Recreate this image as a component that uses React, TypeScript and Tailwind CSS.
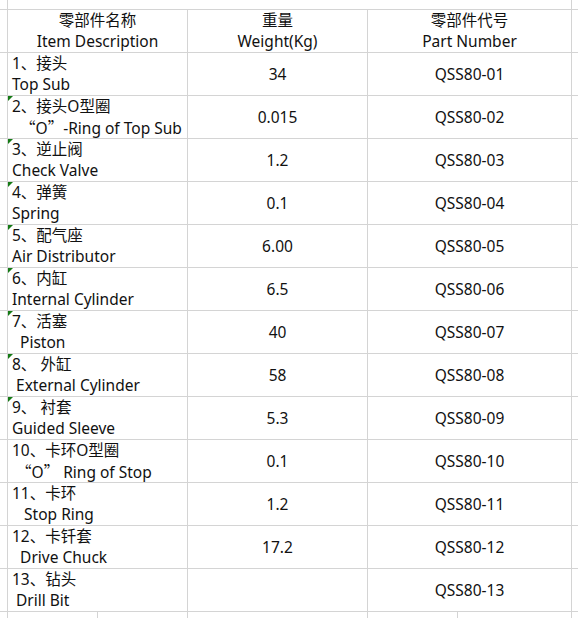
import React from 'react';

type Row = {
  zh: string;
  en: string;
  weight: string;
  part: string;
  flag?: boolean;
};

const rows: Row[] = [
  { zh: '1、接头', en: 'Top Sub', weight: '34', part: 'QSS80-01' },
  { zh: '2、接头O型圈', en: '  “O”-Ring of Top Sub', weight: '0.015', part: 'QSS80-02', flag: true },
  { zh: '3、逆止阀', en: 'Check Valve', weight: '1.2', part: 'QSS80-03', flag: true },
  { zh: '4、弹簧', en: 'Spring', weight: '0.1', part: 'QSS80-04', flag: true },
  { zh: '5、配气座', en: 'Air Distributor', weight: '6.00', part: 'QSS80-05', flag: true },
  { zh: '6、内缸', en: 'Internal Cylinder', weight: '6.5', part: 'QSS80-06', flag: true },
  { zh: '7、活塞', en: '  Piston', weight: '40', part: 'QSS80-07', flag: true },
  { zh: '8、 外缸', en: ' External Cylinder', weight: '58', part: 'QSS80-08', flag: true },
  { zh: '9、 衬套', en: 'Guided Sleeve', weight: '5.3', part: 'QSS80-09', flag: true },
  { zh: '10、卡环O型圈', en: ' “O” Ring of Stop', weight: '0.1', part: 'QSS80-10' },
  { zh: '11、卡环', en: '   Stop Ring', weight: '1.2', part: 'QSS80-11' },
  { zh: '12、卡钎套', en: '  Drive Chuck', weight: '17.2', part: 'QSS80-12' },
  { zh: '13、钻头', en: ' Drill Bit', weight: '', part: 'QSS80-13' },
];

const line = 'border-[#d4d4d4]';

// full-width quotes, as the CJK font draws them
const withQuotes = (s: string) =>
  s.split(/([“”])/).map((part, i) =>
    part === '“' || part === '”' ? (
      <span key={i} style={{ fontFamily: "'Noto Sans CJK SC', sans-serif" }}>
        {part}
      </span>
    ) : (
      <React.Fragment key={i}>{part}</React.Fragment>
    )
  );

const App: React.FC = () => {
  return (
    <div
      className="w-[578px] h-[618px] bg-white overflow-hidden flex flex-col text-[15.5px] leading-[21px] text-[#111]"
      style={{ fontFamily: "'Noto Sans', 'Noto Sans CJK SC', sans-serif" }}
    >
      {/* strip above the sheet */}
      <div className={`h-[10px] flex border-b ${line}`}>
        <div className={`w-[8px] border-r ${line}`} />
        <div className="w-[180px]" />
        <div className="w-[180px]" />
        <div className={`w-[204px] border-r ${line}`} />
      </div>

      {/* header */}
      <div className={`h-[43px] flex border-b ${line}`}>
        <div className={`w-[8px] border-r ${line}`} />
        <div className={`w-[180px] border-r ${line} flex flex-col items-center justify-center`}>
          <span>零部件名称</span>
          <span>Item Description</span>
        </div>
        <div className={`w-[180px] border-r ${line} flex flex-col items-center justify-center`}>
          <span>重量</span>
          <span>Weight(Kg)</span>
        </div>
        <div className={`w-[204px] border-r ${line} flex flex-col items-center justify-center`}>
          <span>零部件代号</span>
          <span>Part Number</span>
        </div>
      </div>

      {rows.map((r) => (
        <div key={r.part} className={`h-[43px] flex border-b ${line}`}>
          <div className={`w-[8px] border-r ${line}`} />
          <div className={`relative w-[180px] border-r ${line} flex flex-col justify-center pl-[4px] whitespace-pre`}>
            {r.flag && (
              <span className="absolute left-0 top-0 w-0 h-0 border-t-[5px] border-t-[#157a15] border-r-[5px] border-r-transparent" />
            )}
            <span>{r.zh}</span>
            <span>{withQuotes(r.en)}</span>
          </div>
          <div className={`w-[180px] border-r ${line} flex items-center justify-center`}>
            {r.weight}
          </div>
          <div className={`w-[204px] border-r ${line} flex items-center justify-center`}>
            {r.part}
          </div>
        </div>
      ))}

      {/* next, narrower columns of the sheet */}
      <div className="flex-1 flex">
        <div className={`w-[8px] border-r ${line}`} />
        <div className={`w-[90px] border-r ${line}`} />
        <div className={`w-[90px] border-r ${line}`} />
        <div className={`w-[180px] border-r ${line}`} />
        <div className={`w-[90px] border-r ${line}`} />
        <div className={`w-[114px] border-r ${line}`} />
      </div>
    </div>
  );
};

export default App;
